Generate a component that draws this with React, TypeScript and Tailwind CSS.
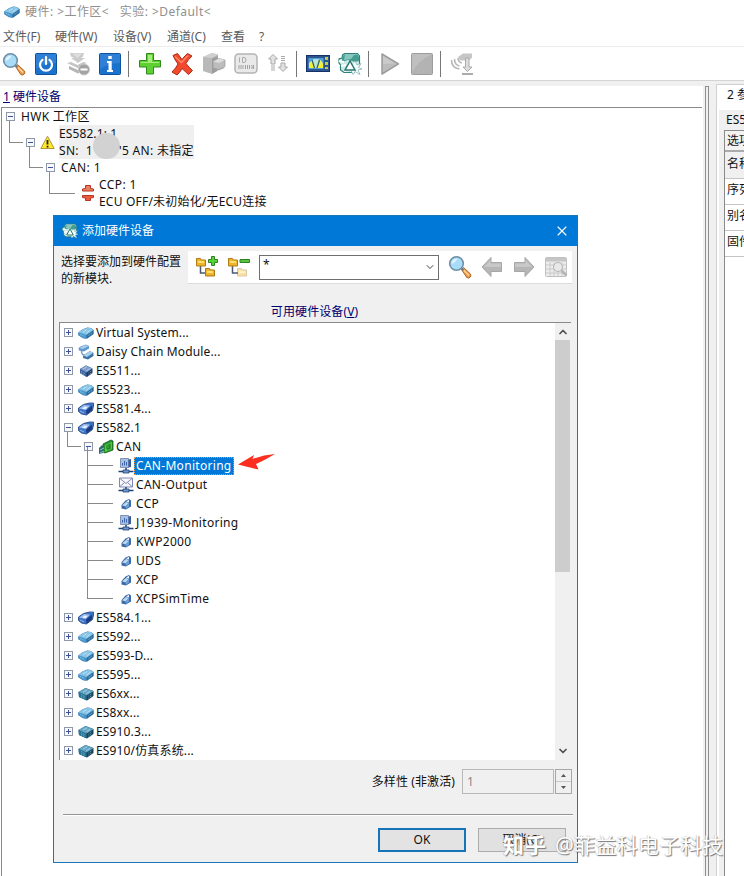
import type { ReactNode } from 'react';
import clsx from 'clsx';
import { ChevronDown, ChevronUp, X } from 'lucide-react';

type BoxKind = 'light' | 'dark' | 'teal' | 'plug' | 'chain';

const boxColors = {
  light: ['#86c4e8', '#4b96cc', '#2d6c9e'],
  dark: ['#7d9ccc', '#3c629c', '#1d3868'],
  teal: ['#62a6c4', '#2a7496', '#17465f'],
  plug: ['#9dc0f0', '#3f74c4', '#1a3d82'],
  chain: ['#a9cfee', '#5f98cc', '#3f74a8'],
};

const BoxIcon = ({ kind }: { kind: BoxKind }) => {
  const [top, left, right] = boxColors[kind];

  if (kind === 'chain') {
    return (
      <svg width="16" height="16" viewBox="0 0 16 16" className="shrink-0">
        <path d="m0.500 4 2-1.500L8 0.500l3 1.500v2.500L6 7.500 1 6.500Z" fill={left} />
        <path d="m1 4 6.500-3L10.500 2 5 5Z" fill={top} />
        <path d="m5 11.500 7-4.500 3.500 2v3L10 15.500l-5-1.500Z" fill={right} />
        <path d="m5 11.500 7-4.500 3 2-6 4Z" fill={top} />
        <path d="M3.500 7q0 4 3 4" fill="none" stroke="#7fa3c4" strokeWidth="1.500" />
      </svg>
    );
  }

  if (kind === 'plug') {
    return (
      <svg width="16" height="16" viewBox="0 0 16 16" className="shrink-0">
        <path d="m0.500 7 5-3.500 6-1.500L15.500 2v3l-1 4.500-6 4.500-5-1-3-2.500Z" fill={left} stroke={right} strokeWidth="0.800" />
        <path d="m1 7.500 5-3.500 6 0.500L8 9Z" fill={top} />
        <path d="m8 9.500 6-5v5l-5.500 4Z" fill={right} />
        <path d="m10.500 3.500 2-1.500h3l-1.500 3Z" fill="#3d6fb8" />
        <path d="m4 7.500 3-2 2.500 0.700-2.500 2Z" fill="#eaf4ff" />
        <path d="m2 10 4 2" stroke="#8fbaf0" />
      </svg>
    );
  }

  if (kind === 'light') {
    return (
      <svg width="16" height="16" viewBox="0 0 16 16" className="shrink-0">
        <path d="m0.300 7.500 4-3 5-2 3.500 0.500L15.700 5v4L9 13.700l-4-0.500-4.700-3Z" fill={right} />
        <path d="m0.500 7.500 8 2.500v3.500L5 13 0.500 10Z" fill={left} />
        <path d="m0.500 7.500 4-3 5-1.800 3 0.300 3 2L8.500 10Z" fill={top} />
        <path d="m5 7 4-2.500M8.500 8l4-3" stroke="#dff3ff" strokeOpacity="0.600" />
        <path d="m2 9.500 4.500 2M10.500 10.500l4-3" stroke="#8fe0f0" strokeOpacity="0.700" strokeDasharray="1.500 1" />
      </svg>
    );
  }

  return (
    <svg width="16" height="16" viewBox="0 0 16 16" className="shrink-0">
      <path
        d={kind === 'dark' ? 'm2 6 6-3.500 6.500 3v4.500L9 14l-7-4Z' : 'm0.500 6 7-4 8 3v5L9 14.500 1 11Z'}
        fill={right}
      />
      <path d={kind === 'dark' ? 'm2 6 6.500 3.500V14L2 10Z' : 'm0.500 6 8 3.500v5L1 11Z'} fill={left} />
      <path d={kind === 'dark' ? 'm2 6 6-3.500 6.500 3-6 4Z' : 'm0.500 6 7-4 8 3.300-7 4.200Z'} fill={top} />
      <path d="m5 6 4-2M8.500 7.500l3.500-2" stroke="#eaf6ff" strokeOpacity="0.500" />
      <path d="m3 8.500 4 2.200M3 10.500l4 2M10.500 10l3.500-2.500M10.500 12l3.500-2.500" stroke="#a6e2f2" strokeOpacity="0.600" strokeDasharray="1 1" />
    </svg>
  );
};

const SearchIcon = () => (
  <svg width="24" height="24" viewBox="0 0 24 24">
    <path d="m13.500 14.500 2-2 7 6.500q1 2-0.500 3.300t-3.200 0.200Z" fill="#ed9a45" stroke="#a96528" />
    <path d="m15 14.500 6 6" stroke="#ffd49a" strokeWidth="1.500" />
    <path d="m12.500 12.500 3 3" stroke="#777" strokeWidth="2" />
    <circle cx="8.500" cy="8.500" r="6.800" fill="#a9dcf8" stroke="#6f8fa6" strokeWidth="1.600" />
    <path d="M3.500 9q0-5 6-5.500Q8 7 3.500 9Z" fill="#e2f5ff" />
  </svg>
);

const PowerIcon = () => (
  <svg width="24" height="24" viewBox="0 0 24 24">
    <rect x="1.500" y="1.500" width="21" height="21" rx="1" fill="#1b72cc" stroke="#0c529f" />
    <path d="M2 2h20v9Q10 11 2 17Z" fill="#2f80d4" />
    <path d="M8.500 7.800a6 6 0 1 0 7 0M12 5v7" fill="none" stroke="#fff" strokeWidth="2.200" strokeLinecap="round" />
  </svg>
);

const StackRemoveIcon = () => (
  <svg width="24" height="24" viewBox="0 0 24 24">
    <path d="M4 1h14l-1 3.500-2 1.500h4l-7 5-7-5h3L5 4.500Z" fill="#cbcbcb" />
    <path d="M6 1.500h10L11.500 6Z" fill="#dedede" />
    <path d="m1 11 4-1 6.500 3 6-3 3 1-9 5Z" fill="#c4c4c4" />
    <path d="m3 14 9 4 6-3v3l-6 3.500L3 17Z" fill="#b4b4b4" />
    <circle cx="18" cy="17.500" r="5.500" fill="#a3a3a3" stroke="#c9c9c9" />
    <path d="M14.500 17.500h7" stroke="#fff" strokeWidth="2" />
  </svg>
);

const InfoIcon = () => (
  <svg width="24" height="24" viewBox="0 0 24 24">
    <rect x="1.500" y="1.500" width="21" height="21" rx="1" fill="#1b72cc" stroke="#0c529f" />
    <path d="M2 2h20v9Q10 11 2 17Z" fill="#2f80d4" />
    <path d="M10.300 4h3.400v3h-3.400ZM9 9h4.700v9H15v2H9v-2h1.500v-7H9Z" fill="#fff" />
  </svg>
);

const AddIcon = () => (
  <svg width="24" height="24" viewBox="0 0 24 24">
    <path d="M8.500 1.500h7v7h7v6.500h-7v7h-7v-7h-7V8.500h7Z" fill="#5ed031" stroke="#318a20" />
    <path d="M10 3h4v7h7v1H3v-1h7Z" fill="#a5ee7c" />
  </svg>
);

const DeleteIcon = () => (
  <svg width="24" height="24" viewBox="0 0 24 24">
    <path
      d="M3 3.500 7.500 1.500 12 7.500q3-4 5.500-6L22 4q-4 3.500-6 7.500 3 4 6.500 7l-4 4-6.500-6q-2 4-5 6.500l-5-3q4-4 6-8-3-4-5-8.500Z"
      fill="#f0492b"
      stroke="#b02a18"
    />
    <path d="m5 4.500 6.500 6L18 3.500" fill="none" stroke="#ff8a68" strokeWidth="1.500" />
  </svg>
);

const ModuleIcon = () => (
  <svg width="24" height="24" viewBox="0 0 24 24">
    <path d="m1 5 9-4 6 1.500V14l7 2-8 3-5 3-9-3Z" fill="#b9b9b9" />
    <path d="m1 5 9-4 6 1.500L10 6Z" fill="#d0d0d0" />
    <path d="M10 6.500v15.500l5-3V9l1-5Z" fill="#9e9e9e" />
    <path d="m11 9.500 6-3 6 1.500v6.500l-6 3-6-1.500Z" fill="#bdbdbd" stroke="#999" strokeWidth="0.700" />
    <path d="m11 9.500 6-3 6 1.500-6 3Z" fill="#dcdcdc" />
  </svg>
);

const IdIcon = () => (
  <svg width="24" height="24" viewBox="0 0 24 24">
    <rect x="1" y="2" width="22" height="19" rx="3.500" fill="#e9e9e9" stroke="#b4b4b4" strokeWidth="1.500" />
    <path d="M5.500 5.500v5M8.500 5.500v5h1.500q2 0 2-2.500t-2-2.500Z" fill="none" stroke="#aaa" />
    <path d="M5 13v4M7 13v4M9 13v4M11.500 13v4M13.500 13v4M15.500 13v4M18 13v4M19.500 13v4" stroke="#a3a3a3" />
  </svg>
);

const TransferIcon = () => (
  <svg width="24" height="24" viewBox="0 0 24 24" fill="#e2e2e2" stroke="#aaa">
    <path d="M7 2.500 11.500 7H9v5H5V7H2.500ZM15 11h4v4h2.500L17 19.500 12.500 15H15Z" />
    <path d="M5 14h4M5 16h4M5 18h4M15 4.500h4M15 6.500h4M15 8.500h4" />
  </svg>
);

const GaugeIcon = () => (
  <svg width="24" height="24" viewBox="0 0 24 24">
    <rect x="0.500" y="3.500" width="23" height="16" fill="#2c558c" stroke="#16306c" />
    <path d="M2.500 6h15v11h-15Z" fill="#4f9fd8" />
    <path d="M3 16v-4q2-5 7-5 6 0 7 5v4Z" fill="#b8e4dc" />
    <path d="M3 16v-5l4-2 2 7ZM11 16l1-7h3l2 3v4Z" fill="#f4ee3c" />
    <path d="m6 8 2.500 8M13.500 8 11 16" stroke="#286069" strokeWidth="1.200" />
    <path d="M19 5h3v3h-3ZM19 10h3v3h-3ZM19 15h3v2h-3Z" fill="#c8c94a" />
  </svg>
);

const CalibrateIcon = ({ size = 24 }: { size?: number }) => (
  <svg width={size} height={size} viewBox="0 0 24 24">
    <path d="m4.500 3 2-1.500h13L21.500 4v9L16 20.500H6L2.500 18V13L1 11V7l3-1Z" fill="#cdeae6" stroke="#2b8179" strokeWidth="1.200" />
    <path d="M6 2.500h13.500L21 5v4l-4 1-7-2-6 2V6Z" fill="#459d92" />
    <path d="M7 3h9l-3 4-7 1Z" fill="#86c8bf" />
    <path d="m1 9 5 1M3 14l5-1M6 19l4-1.500" stroke="#fff" strokeWidth="2" />
    <path d="m17 9 2 4 4-1.500-2.500 4 3.500 1.500-4 1 2 4.500-5-3-2 3-2-4" fill="#f5ffff" stroke="#8ab5b3" strokeWidth="0.800" />
    <path d="m12 9 5 9H7Z" fill="#fff" stroke="#28776f" strokeWidth="1.500" />
  </svg>
);

const PlayIcon = () => (
  <svg width="24" height="24" viewBox="0 0 24 24">
    <path d="m4 2 16.500 9.800L4 22Z" fill="#bcbcbc" stroke="#9c9c9c" strokeWidth="1.500" strokeLinejoin="round" />
    <path d="m5 4 12 7.500L5 12Z" fill="#cacaca" />
  </svg>
);

const StopIcon = () => (
  <svg width="24" height="24" viewBox="0 0 24 24">
    <rect x="1.500" y="1.500" width="21" height="21" rx="1" fill="#b3b3b3" stroke="#9c9c9c" />
    <path d="M2 2h20Q9 8 2 20Z" fill="#bfbfbf" />
  </svg>
);

const FlashIcon = () => (
  <svg width="24" height="24" viewBox="0 0 24 24">
    <path d="m8 5 5-3.500h9v4l-3 3h-9Z" fill="#c6c6c6" />
    <path d="M1.500 8q0 8 8 9M4.500 7q0 6 5 7M8 6q0 4 4 5" fill="none" stroke="#b8b8b8" strokeWidth="1.600" />
    <path d="M15.500 6h3.500v9h3L17.500 19.500 13 15h2.500Z" fill="#ddd" stroke="#aaa" />
    <path d="M12 22h11" stroke="#a3a3a3" strokeWidth="1.800" />
  </svg>
);

const FolderTreeIcon = ({ remove }: { remove?: boolean }) => (
  <svg width="24" height="24" viewBox="0 0 24 24">
    <path d="M5.500 11v7H11" fill="none" stroke="#4a5a70" strokeWidth="1.500" />
    <path d="M1.500 3.500h4l1 1.500h4v6h-9Z" fill="#eeb52b" stroke="#b07c18" />
    <path d="M3 6h6v2H3Z" fill="#ffdf6b" />
    <g opacity={remove ? 0.4 : 1}>
      <path d="M10.500 13.500h4l1 1.500h4v6h-9Z" fill="#eeb52b" stroke="#a77818" />
      <path d="M12 16h6v2h-6Z" fill="#ffdf6b" />
    </g>
    {remove ? (
      <path d="M13 4.500h9.500v3H13Z" fill="#5ac33d" stroke="#2a831f" />
    ) : (
      <path d="M16.500 1.500h3v3h3v3h-3v3h-3v-3h-3v-3h3Z" fill="#5ad03a" stroke="#2a831f" />
    )}
  </svg>
);

const ArrowIcon = ({ flip }: { flip?: boolean }) => (
  <svg width="24" height="24" viewBox="0 0 24 24" className={clsx(flip && '-scale-x-100')}>
    <path d="m2 12 9-9.500v5h10.500v9H11v5Z" fill="#b6b6b6" stroke="#a6a6a6" />
    <path d="M4 12 10.500 5v3.500H21V12Z" fill="#c8c8c8" />
  </svg>
);

const TableSearchIcon = () => (
  <svg width="24" height="24" viewBox="0 0 24 24">
    <rect x="1.500" y="2.500" width="21" height="19" rx="1" fill="#ececec" stroke="#c0c0c0" />
    <path d="M2 3h20v3.500H2Z" fill="#c6c6c6" />
    <path d="M6 7v14M10 7v14M14 7v14M18 7v14M2 10h20M2 14h20M2 18h20" stroke="#cacaca" />
    <circle cx="14" cy="12" r="4.500" fill="#e8e8e8" stroke="#b4b4b4" />
    <path d="m17.500 15.500 5 5" stroke="#b4b4b4" strokeWidth="2.500" />
  </svg>
);

const WarningIcon = () => (
  <svg width="15" height="15" viewBox="0 0 15 15" className="shrink-0">
    <path d="M7.500 1.200 14.200 13.500H0.800Z" fill="#ffe928" stroke="#b0963a" strokeLinejoin="round" />
    <path d="M7.500 5v4.500M7.500 10.800v1.700" stroke="#222" strokeWidth="1.800" />
  </svg>
);

const DisconnectedIcon = () => (
  <svg width="12" height="17" viewBox="0 0 12 17" className="shrink-0">
    <path d="M3.500 0.500h5v3l3 0.500v2H0.500V4l3-0.500Z" fill="#f17d61" stroke="#b03824" />
    <path d="M0.500 10.500h11v2l-3 0.500v2.500h-5V13l-3-0.500Z" fill="#f1583d" stroke="#b03824" />
  </svg>
);

const CanIcon = () => (
  <svg width="16" height="16" viewBox="0 0 16 16" className="shrink-0">
    <path d="M5 5 13 1l2 1v9l-8 3-2-1Z" fill="#23942c" stroke="#155b1d" strokeWidth="0.800" />
    <path d="m7 6 7-3v7l-7 3Z" fill="#4fcb45" />
    <path d="M9 6v4h2V5M12 5v5" fill="none" stroke="#176a20" />
    <path d="m1 9 3-3 1 1v7l-4 1Z" fill="#2f6870" />
    <path d="m2 11 4-2M2 14l4-2" stroke="#9bc6c9" />
  </svg>
);

const MonitorIcon = () => (
  <svg width="16" height="16" viewBox="0 0 16 16" className="shrink-0">
    <path d="M2.500 0.500h8v9h-8Z" fill="#a8bfe4" stroke="#7f93b8" />
    <path d="M10.500 1.500 13 1v8l-2.500 0.500Z" fill="#3a5a94" />
    <path d="M4.500 7.500V5M6.500 7.500V3M8.500 7.500V4" stroke="#3f68ac" />
    <path d="M8 10v3M0.500 13.500h15" stroke="#1f4377" strokeWidth="1.500" />
    <path d="M5 12h6v3H5Z" fill="#6f97cc" stroke="#1f4377" strokeWidth="0.800" />
  </svg>
);

const MailIcon = () => (
  <svg width="16" height="16" viewBox="0 0 16 16" className="shrink-0">
    <path d="M1.500 1h13v9h-13Z" fill="#f7f8ff" stroke="#8187b2" />
    <path d="m2 1.500 6 5 6-5M2 9.500l4.500-4M14 9.500l-4.500-4" fill="none" stroke="#8187b2" />
    <path d="M8 10v3M0.500 13.500h15" stroke="#1f4377" strokeWidth="1.500" />
    <path d="M5 12h6v3H5Z" fill="#6f97cc" stroke="#1f4377" strokeWidth="0.800" />
  </svg>
);

const ProtocolIcon = () => (
  <svg width="16" height="16" viewBox="0 0 16 16" className="shrink-0">
    <path d="m3.500 9 4-4.500L11 3l2 1.500v6L8 13.500l-4.500-1Z" fill="#3c6aa6" />
    <path d="m4 9.200 4-3.200 3 1-3.500 3.500Z" fill="#b9d8f4" />
    <path d="m8 5.500 3-1.700v2.700Z" fill="#e6f1fb" />
    <path d="M7.500 10.500 11 7v3.500l-3 2.500Z" fill="#6f9ed4" />
  </svg>
);

const Expander = ({ open }: { open?: boolean }) => (
  <div className="flex h-[9px] w-[9px] shrink-0 items-center justify-center border border-[#8f98a8] bg-[#f7f9fd]">
    <svg width="7" height="7" viewBox="0 0 7 7" stroke="#3f4f9c">
      <path d="M1 3.500h5" />
      {!open && <path d="M3.500 1v5" />}
    </svg>
  </div>
);

const Separator = () => (
  <div className="flex h-[26px] w-2 pl-[2px]">
    <div className="w-px bg-[#777]" />
  </div>
);

const ToolButton = ({ children }: { children: ReactNode }) => <button className="mx-1 size-6 shrink-0">{children}</button>;

const menuItems = [
  { label: '文件(F)', width: 'w-[52px]' },
  { label: '硬件(W)', width: 'w-[58px]' },
  { label: '设备(V)', width: 'w-[54px]' },
  { label: '通道(C)', width: 'w-[54px]' },
  { label: '查看', width: 'w-[38px]' },
  { label: '?', width: 'w-5' },
];

const MainToolbar = () => (
  <div className="flex h-[35px] items-center border-t border-b border-t-[#ececec] border-b-[#d4d4d4]">
    <div className="-ml-[2px] flex items-center">
      <ToolButton><SearchIcon /></ToolButton>
      <ToolButton><PowerIcon /></ToolButton>
      <ToolButton><StackRemoveIcon /></ToolButton>
      <ToolButton><InfoIcon /></ToolButton>
      <Separator />
      <ToolButton><AddIcon /></ToolButton>
      <ToolButton><DeleteIcon /></ToolButton>
      <ToolButton><ModuleIcon /></ToolButton>
      <ToolButton><IdIcon /></ToolButton>
      <ToolButton><TransferIcon /></ToolButton>
      <Separator />
      <ToolButton><GaugeIcon /></ToolButton>
      <ToolButton><CalibrateIcon /></ToolButton>
      <Separator />
      <ToolButton><PlayIcon /></ToolButton>
      <ToolButton><StopIcon /></ToolButton>
      <Separator />
      <ToolButton><FlashIcon /></ToolButton>
    </div>
  </div>
);

const WorkspaceTree = () => (
  <div className="flex h-full flex-col border-t border-l border-[#8a8a8a] leading-[17px]">
    <div className="flex h-[17px] items-center pl-1">
      <Expander open />
      <span className="ml-1.5 tracking-[0.3px]">HWK 工作区</span>
    </div>
    <div className="flex h-[34px] items-center pl-[7px]">
      <div className="-mt-1 mr-[3px] h-[22px] w-[14px] self-start border-b border-l border-[#888]" />
      <Expander open />
      <div className="ml-[5px]"><WarningIcon /></div>
      <div className="ml-[4px] h-[34px] w-[135px] bg-[#efefef] whitespace-pre">
        <div className="tracking-[0.1px]">ES582.1: 1</div>
        <div className="flex">
          <span className="w-[34px] tracking-[0.3px]">SN:  1</span>
          <span className="-mt-[9px] h-[26px] w-[27px] rounded-full bg-[#d2d2d2]" />
          <span className="-ml-px tracking-[0.3px]">'5 AN: 未指定</span>
        </div>
      </div>
    </div>
    <div className="flex h-[17px] items-center pl-[27px]">
      <div className="-mt-[13px] mr-[3px] h-[22px] w-[14px] self-start border-b border-l border-[#888]" />
      <Expander open />
      <span className="ml-1.5 tracking-[0.4px]">CAN: 1</span>
    </div>
    <div className="flex h-[34px] items-center pl-[47px]">
      <div className="-mt-1 mr-[7px] h-[22px] w-[26px] self-start border-b border-l border-[#888]" />
      <DisconnectedIcon />
      <div className="ml-[5px] tracking-[0.2px]">
        <div className="tracking-[0.4px]">CCP: 1</div>
        <div className="whitespace-nowrap">ECU OFF/未初始化/无ECU连接</div>
      </div>
    </div>
  </div>
);

const parameterRows = ['序列号', '别名', '固件'];

const ParameterPanel = () => (
  <div className="flex w-[28px] flex-col overflow-hidden border-t border-l border-[#d0d0d0] bg-white whitespace-nowrap">
    <div className="h-[25px] pl-2.5 leading-[20px]">2 参数</div>
    <div className="ml-0.5 flex flex-1 flex-col bg-[#f0f0f0] pl-[5px]">
      <div className="h-[20px] pl-0.5 leading-[19px]">ES582.1</div>
      <div className="flex-1 border-t border-l border-[#8a8a8a] bg-white">
        <div className="h-[21px] border-b-2 border-[#aaa] bg-[#f3f3f3] pl-0.5 leading-[20px]">选项</div>
        <div className="h-[27px] border-b border-[#c4c4c4] bg-[#f0f0f0] pl-0.5 leading-[23px]">名称</div>
        {parameterRows.map((row) => (
          <div key={row} className="h-[26px] border-b border-[#c4c4c4] pl-0.5 leading-[22px]">
            {row}
          </div>
        ))}
      </div>
    </div>
  </div>
);

const RootRow = ({ label, kind, open }: { label: string; kind: BoxKind; open?: boolean }) => (
  <div className="flex h-[19px] items-center pl-1">
    <Expander open={open} />
    <div className="ml-[5px]"><BoxIcon kind={kind} /></div>
    <span className="ml-0.5 whitespace-nowrap">{label}</span>
  </div>
);

const topModules: { label: string; kind: BoxKind }[] = [
  { label: 'Virtual System...', kind: 'light' },
  { label: 'Daisy Chain Module...', kind: 'chain' },
  { label: 'ES511...', kind: 'dark' },
  { label: 'ES523...', kind: 'light' },
  { label: 'ES581.4...', kind: 'plug' },
];

const bottomModules: { label: string; kind: BoxKind }[] = [
  { label: 'ES584.1...', kind: 'plug' },
  { label: 'ES592...', kind: 'light' },
  { label: 'ES593-D...', kind: 'light' },
  { label: 'ES595...', kind: 'light' },
  { label: 'ES6xx...', kind: 'teal' },
  { label: 'ES8xx...', kind: 'light' },
  { label: 'ES910.3...', kind: 'teal' },
  { label: 'ES910/仿真系统...', kind: 'teal' },
];

const canModules = [
  { label: 'CAN-Monitoring', icon: <MonitorIcon />, selected: true },
  { label: 'CAN-Output', icon: <MailIcon /> },
  { label: 'CCP', icon: <ProtocolIcon /> },
  { label: 'J1939-Monitoring', icon: <MonitorIcon /> },
  { label: 'KWP2000', icon: <ProtocolIcon /> },
  { label: 'UDS', icon: <ProtocolIcon /> },
  { label: 'XCP', icon: <ProtocolIcon /> },
  { label: 'XCPSimTime', icon: <ProtocolIcon /> },
];

const DeviceList = () => (
  <div className="flex h-[438px] border-t border-l border-[#8a8a8a] bg-white">
    <div className="flex-1 tracking-[0.15px]">
      {topModules.map((item) => (
        <RootRow key={item.label} {...item} />
      ))}
      <RootRow label="ES582.1" kind="plug" open />
      <div className="flex h-[19px] items-center pl-[7px]">
        <div className="-mt-[5px] mr-[3px] h-[15px] w-[14px] self-start border-b border-l border-[#888]" />
        <Expander open />
        <div className="ml-[5px]"><CanIcon /></div>
        <span className="ml-0.5 tracking-[0.4px]">CAN</span>
      </div>
      {canModules.map((item) => (
        <div key={item.label} className="flex h-[19px] items-center pl-[27px]">
          <div className="-mt-[9px] mr-[5px] h-[19px] w-[26px] self-start border-b border-l border-[#888]" />
          {item.icon}
          <div
            className={clsx(
              'border px-px leading-[16px] tracking-[0.3px] whitespace-nowrap',
              item.selected ? 'border-dotted border-[#e39a4c] bg-[#0078d7] text-white' : 'border-transparent',
            )}
          >
            {item.label}
          </div>
          {item.selected && (
            <svg width="37" height="17" viewBox="0 0 37 17" className="-mt-[9px] ml-1">
              <path d="M0 11.500 16 2l-1.500 4Q25 2 37 1 27 7 18 11l2.500 5.500Z" fill="#fb2e1f" />
            </svg>
          )}
        </div>
      ))}
      {bottomModules.map((item) => (
        <RootRow key={item.label} {...item} />
      ))}
    </div>
    <div className="flex w-4 flex-col items-center bg-[#f0f0f0] pr-px">
      <div className="flex h-[17px] items-center"><ChevronUp size={12} strokeWidth={3.5} color="#505050" /></div>
      <div className="h-[232px] w-[15px] bg-[#cdcdcd]" />
      <div className="mt-auto flex h-[18px] items-center"><ChevronDown size={12} strokeWidth={3.5} color="#505050" /></div>
    </div>
  </div>
);

const AddDeviceDialog = () => (
  <div className="absolute top-[215px] left-[53px] flex h-[648px] w-[525px] flex-col border border-[#1877b8] bg-[#f0f0f0]">
    <div className="flex h-[30px] shrink-0 items-center bg-[#0078d7] pl-2 text-white">
      <CalibrateIcon size={16} />
      <span className="ml-1">添加硬件设备</span>
      <X size={16} strokeWidth={1.7} className="mr-[7px] ml-auto" />
    </div>
    <div className="mt-[5px] flex h-[33px] shrink-0 pr-[5px] pl-[7px]">
      <div className="w-[127px] pt-0.5 leading-[17px]">选择要添加到硬件配置的新模块.</div>
      <div className="flex flex-1 items-center border-b border-[#dcdcdc] bg-white pl-[3px]">
        <ToolButton><FolderTreeIcon /></ToolButton>
        <ToolButton><FolderTreeIcon remove /></ToolButton>
        <div className="mr-[5px] ml-1 flex h-[25px] w-[180px] shrink-0 items-center border border-[#6f6f6f] pr-0.5 pl-[3px]">
          <span className="-mt-1">*</span>
          <ChevronDown size={12} strokeWidth={2} color="#444" className="ml-auto" />
        </div>
        <ToolButton><SearchIcon /></ToolButton>
        <ToolButton><ArrowIcon /></ToolButton>
        <ToolButton><ArrowIcon flip /></ToolButton>
        <ToolButton><TableSearchIcon /></ToolButton>
      </div>
    </div>
    <div className="h-[38px] shrink-0 pt-[19px] pr-0.5 text-center leading-[17px] tracking-[0.1px] text-[#00006e]">
      可用硬件设备(<u>V</u>)
    </div>
    <div className="pr-1.5 pl-[5px]">
      <DeviceList />
    </div>
    <div className="mt-[9px] flex h-[25px] shrink-0 items-center justify-end pr-[5px]">
      <span className="tracking-[0.1px]">多样性 (非激活)</span>
      <div className="ml-[7px] flex h-[25px] w-[92px] items-center border border-[#b8b8b8] pl-1 text-[#8a8a8a]">1</div>
      <div className="ml-px flex h-[25px] w-[17px] flex-col border border-[#a6a6a6]">
        <div className="flex flex-1 items-center justify-center border-b border-[#c8c8c8]">
          <svg width="5" height="3"><path d="M0 3 2.500 0 5 3Z" fill="#555" /></svg>
        </div>
        <div className="flex flex-1 items-center justify-center">
          <svg width="5" height="3"><path d="m0 0 2.500 3L5 0Z" fill="#555" /></svg>
        </div>
      </div>
    </div>
    <div className="mt-5 mr-1 ml-[9px] h-[2px] shrink-0 border-t border-[#949494] bg-white" />
    <div className="mt-[12px] flex justify-end gap-3 pr-[11px]">
      <button className="h-6 w-[88px] border-2 border-[#1874b8] bg-[#e3e3e3]">OK</button>
      <button className="h-6 w-[88px] border border-[#adadad] bg-[#e1e1e1]">取消(C)</button>
    </div>
  </div>
);

const App = () => {
  return (
    <div className="relative flex h-[876px] w-[744px] flex-col overflow-hidden bg-white font-['Noto_Sans','Noto_Sans_CJK_SC',sans-serif] text-[12px] text-[#111]">
      <div className="flex h-[24px] items-center pl-1 text-[#909090]">
        <BoxIcon kind="light" />
        <span className="ml-[5px] whitespace-pre tracking-[0.45px]">{'硬件: >工作区<   实验: >Default<'}</span>
      </div>
      <div className="flex h-[22px] items-center pt-[3px] pl-[3px] text-[#5a5a5a]">
        {menuItems.map((item) => (
          <div key={item.label} className={clsx('whitespace-nowrap', item.width)}>
            {item.label}
          </div>
        ))}
      </div>
      <MainToolbar />
      <div className="flex flex-1 bg-[#f0f0f0] pt-[3px]">
        <div className="mt-0.5 flex w-[703px] flex-col bg-white pr-px pl-px">
          <div className="h-[21px] pl-0.5 leading-[21px] text-[#00006e]">
            <u>1</u> 硬件设备
          </div>
          <div className="flex-1"><WorkspaceTree /></div>
        </div>
        <div className="mt-0.5 ml-0.5 w-1 border-x border-t border-[#8f8f8f]" />
        <div className="w-[7px]" />
        <ParameterPanel />
      </div>
      <AddDeviceDialog />
      <div className="absolute top-[830px] left-[503px] flex gap-2 text-[21px] leading-[30px] whitespace-nowrap text-white [text-shadow:1px_1px_1px_#777,-0.5px_-0.5px_1px_#bbb]">
        <span className="font-bold tracking-[1px]">知乎</span>
        <span className="tracking-[0.3px]">@菲益科电子科技</span>
      </div>
    </div>
  );
};

export default App;
